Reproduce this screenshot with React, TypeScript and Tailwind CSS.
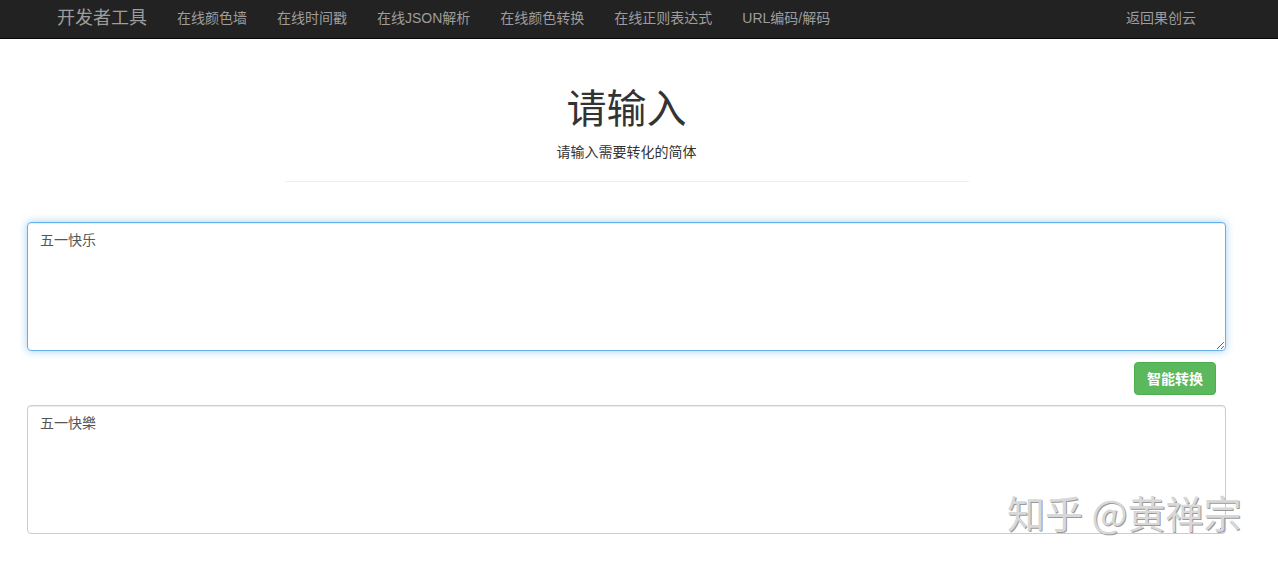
const navLinks = [
  "在线颜色墙",
  "在线时间戳",
  "在线JSON解析",
  "在线颜色转换",
  "在线正则表达式",
  "URL编码/解码",
];

const font = {
  fontFamily:
    '"Helvetica Neue", "Liberation Sans", "Noto Sans CJK SC", sans-serif',
};

export default function App() {
  return (
    <div className="min-h-screen bg-white text-[#333] text-sm" style={font}>
      {/* Navbar */}
      <nav className="h-[39px] bg-[#222] border-b border-[#080808] flex items-center pb-[3px] pl-[42px] pr-[67px]">
        <span className="px-[15px] text-[18px] text-[#9d9d9d] leading-none">
          开发者工具
        </span>
        {navLinks.map((l) => (
          <a key={l} className="px-[15px] text-[14px] text-[#9d9d9d] leading-none">
            {l}
          </a>
        ))}
        <a className="ml-auto px-[15px] text-[14px] text-[#9d9d9d] leading-none">
          返回果创云
        </a>
      </nav>

      <main className="w-[1253px] relative">
        {/* Header */}
        <div className="flex flex-col items-center pt-[44px]">
          <h1 className="text-[40px] leading-[52px] font-normal text-[#333]">
            请输入
          </h1>
          <p className="mt-[7px] text-[14px] leading-5 text-[#333]">
            请输入需要转化的简体
          </p>
          <hr className="mt-[19px] w-[684px] border-t border-[#eee]" />
        </div>

        {/* Form */}
        <div className="px-[27px] pt-[40px]">
          <textarea
            defaultValue="五一快乐"
            className="block w-full h-[129px] px-3 py-[7px] text-[14px] leading-5 text-[#555] border border-[#66afe9] rounded shadow-[inset_0_1px_1px_rgba(0,0,0,0.075),0_0_8px_rgba(102,175,233,0.6)] outline-none resize-y"
            style={font}
          />
          <div className="flex justify-end pr-[10px] mt-[11px]">
            <button className="h-[33px] w-[82px] bg-[#5cb85c] border border-[#4cae4c] rounded text-white text-[14px] font-bold">
              智能转换
            </button>
          </div>
          <textarea
            defaultValue="五一快樂"
            className="block w-full h-[129px] mt-[10px] px-3 py-[7px] text-[14px] leading-5 text-[#555] border border-[#ccc] rounded shadow-[inset_0_1px_1px_rgba(0,0,0,0.075)] outline-none resize-y"
            style={font}
          />
        </div>

        {/* Watermark */}
        <div
          className="absolute left-[1007px] top-[454px] text-[38px] leading-none text-[#d8d8d8] whitespace-nowrap pointer-events-none [text-shadow:1px_1px_0_#9a9a9a]"
          style={{ fontFamily: '"Noto Sans CJK SC", sans-serif' }}
        >
          知乎 @黄禅宗
        </div>
      </main>
    </div>
  );
}
